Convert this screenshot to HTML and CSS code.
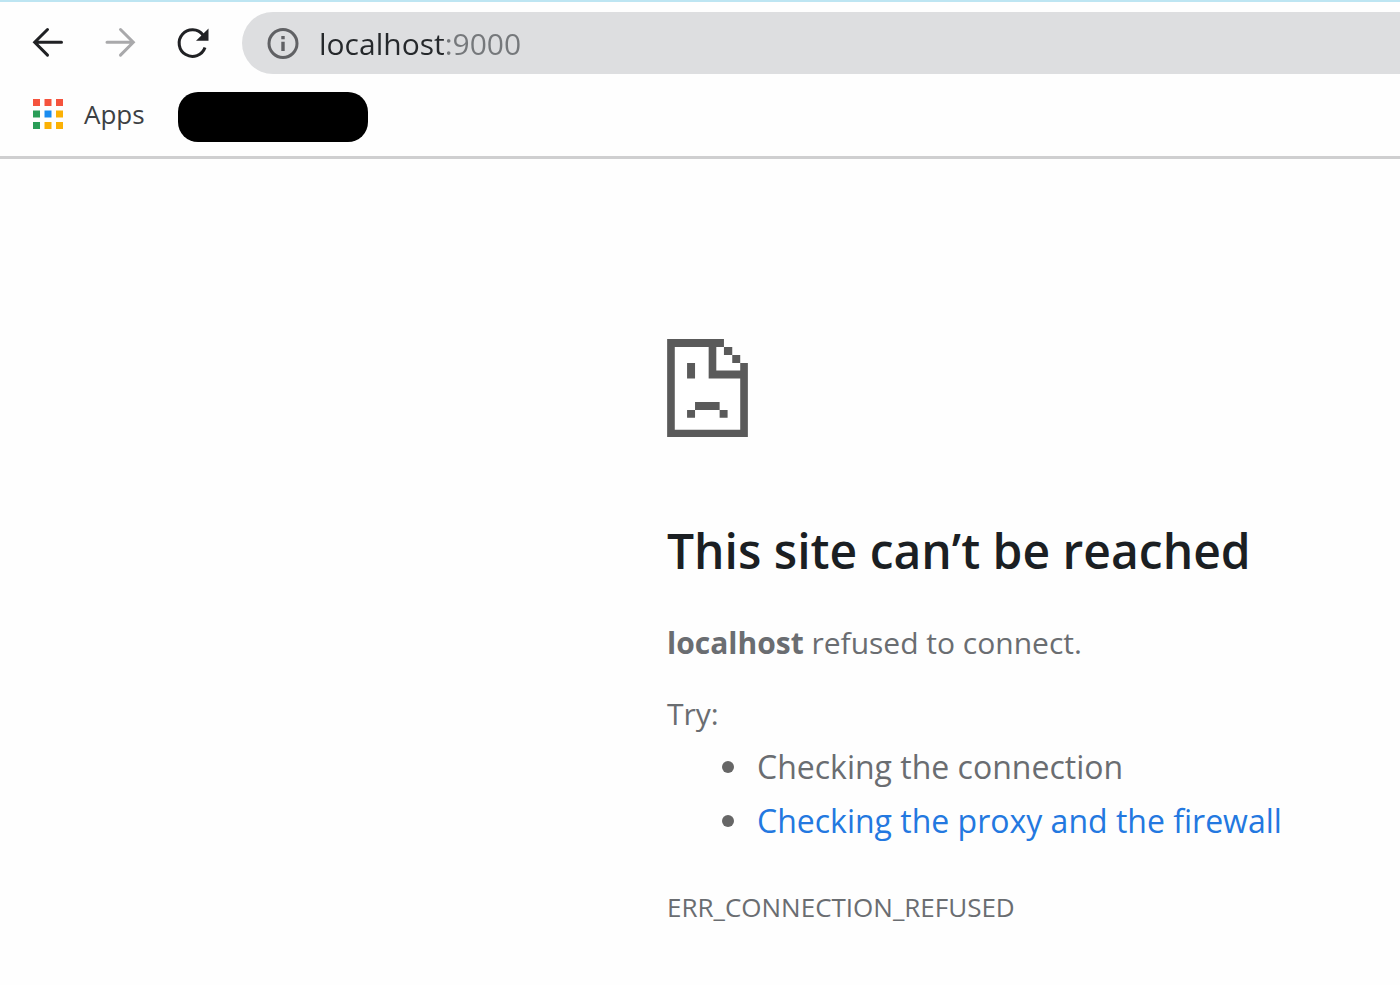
FILE: index.html
```html
<!DOCTYPE html>
<html lang="en">
<head>
  <meta charset="UTF-8">
  <meta name="viewport" content="width=device-width, initial-scale=1.0">
  <title>localhost</title>
  <link rel="stylesheet" href="styles.css">
</head>
<body>
  <header class="browser">
    <div class="toolbar">
      <button class="nav-button" type="button" aria-label="Back">
        <svg class="icon" viewBox="0 0 32 32">
          <path d="M29.5 15.3H3M15.500 2.500L2.700 15.300l12.800 12.800" stroke-linecap="round"/>
        </svg>
      </button>
      <button class="nav-button" type="button" aria-label="Forward" disabled>
        <svg class="icon" viewBox="0 0 32 32">
          <path d="M3 15.300h26M16.500 2.500l12.800 12.800-12.800 12.800" stroke-linecap="round"/>
        </svg>
      </button>
      <button class="nav-button" type="button" aria-label="Reload">
        <svg class="icon" viewBox="0 0 32 32">
          <path d="M29 20.500A13.300 13.300 0 1 1 27 8"/>
          <path class="icon-solid" d="M32.500 1.500v12.300H20z"/>
        </svg>
      </button>
      <div class="address-bar">
        <svg class="icon info-icon" viewBox="0 0 32 32" aria-hidden="true">
          <circle cx="16" cy="16.500" r="14"/>
          <path class="icon-solid" d="M14.300 9h3.400v3.300h-3.400zM14.300 14.800h3.400v9.200h-3.400z"/>
        </svg>
        <input class="address-input" type="text" value="localhost:9000" aria-label="Address" spellcheck="false">
      </div>
    </div>

    <nav class="bookmarks">
      <a class="bookmark" href="#">
        <svg class="apps-icon" viewBox="0 0 31 31" aria-hidden="true">
          <path fill="#f5533d" d="M1 0h7v7H1zM12.500 0h7v7h-7zM24 0h7v7h-7z"/>
          <path fill="#2a9d58" d="M1 11.500h7v7H1zM1 23h7v7H1z"/>
          <path fill="#1a8cf0" d="M12.500 11.500h7v7h-7z"/>
          <path fill="#fbb105" d="M24 11.500h7v7h-7zM12.500 23h7v7h-7zM24 23h7v7h-7z"/>
        </svg>
        Apps
      </a>
      <span class="bookmark-hidden"></span>
    </nav>
  </header>

  <main class="error-page">
    <svg class="error-icon" viewBox="0 0 243 295" aria-hidden="true">
      <path fill="#fff" d="M12 12h150l70 72v200H12z"/>
      <path d="M0 0h171v24h-23v71h72V72h23v223H0zM23 24v249h197V119h-95V24z" fill-rule="evenodd"/>
      <path d="M171 24h25v24h-25zM196 48h24v24h-24zM60 72h24v47H60zM84 190h74v24H84zM60 214h24v23H60zM158 214h24v23h-24z"/>
    </svg>
    <h1 class="error-title">This site can’t be reached</h1>
    <p class="error-summary"><strong>localhost</strong> refused to connect.</p>
    <p class="try-label">Try:</p>
    <ul class="suggestions">
      <li>Checking the connection</li>
      <li><a href="#">Checking the proxy and the firewall</a></li>
    </ul>
    <p class="error-code">ERR_CONNECTION_REFUSED</p>
  </main>
</body>
</html>
```

FILE: styles.css
```css
:root {
  --background: #fefefe;
  --text: #1b1f23;
  --muted: #6a6d71;
  --link: #2378e0;
  --field: #dddee0;
}

* {
  box-sizing: border-box;
}

body {
  margin: 0;
  background-color: var(--background);
  color: var(--muted);
  font-family: "Segoe UI", "Open Sans", sans-serif;
  font-size: 30px;
}

.browser {
  border-top: 2px solid #bde5f2;
  border-bottom: 3px solid #cfcfd0;
}

.toolbar {
  display: flex;
  align-items: center;
  padding: 10px 0 8px 32px;
}

.nav-button {
  display: flex;
  margin-right: 40px;
  padding: 0;
  border: none;
  background: none;
  color: #202124;
}

.nav-button:disabled {
  color: #a9a9ab;
}

.icon {
  width: 32px;
  height: 32px;
  overflow: visible;
  fill: none;
  stroke: currentColor;
  stroke-width: 3;
}

.icon-solid {
  fill: currentColor;
  stroke: none;
}

.address-bar {
  display: flex;
  flex: 1;
  align-items: center;
  gap: 20px;
  height: 62px;
  margin-left: -6px;
  padding-left: 25px;
  border-radius: 32px 0 0 32px;
  background-color: var(--field);
}

.info-icon {
  flex-shrink: 0;
  color: #606164;
}

.address-input {
  flex: 1;
  min-width: 0;
  padding: 0;
  border: none;
  outline: none;
  /* host name is darker than the port */
  background: linear-gradient(to right, #25282b 126px, #75787b 126px);
  -webkit-background-clip: text;
  background-clip: text;
  color: transparent;
  font-family: inherit;
  font-size: 30px;
}

.bookmarks {
  display: flex;
  align-items: flex-start;
  gap: 33px;
  padding: 10px 32px 14px;
}

.bookmark {
  display: flex;
  align-items: center;
  gap: 21px;
  color: #3c4043;
  font-size: 26px;
  line-height: 44px;
  text-decoration: none;
}

.apps-icon {
  width: 31px;
  height: 31px;
}

.bookmark-hidden {
  width: 190px;
  height: 50px;
  border-radius: 20px;
  background-color: #000;
}

.error-page {
  margin-left: calc(50% - 33px);
  padding: 180px 0 40px;
}

.error-icon {
  display: block;
  width: 81px;
  height: 98px;
  fill: #5a5a5a;
}

.error-title {
  margin: 80px 0 0;
  color: var(--text);
  font-size: 48px;
  font-weight: 600;
  line-height: 68px;
}

.error-summary {
  margin: 36px 0 0;
  line-height: 44px;
}

.try-label {
  margin: 27px 0 0;
  line-height: 44px;
}

.suggestions {
  margin: 4px 0 0;
  padding-left: 55px;
  font-size: 32px;
  line-height: 54px;
  list-style: none;
}

.suggestions li {
  display: flex;
  align-items: center;
  gap: 23px;
}

.suggestions li::before {
  content: "";
  width: 12px;
  height: 12px;
  border-radius: 50%;
  background-color: #666;
}

.suggestions a {
  color: var(--link);
  text-decoration: none;
}

.error-code {
  margin: 41px 0 0;
  font-size: 26px;
  line-height: 36px;
}
```
